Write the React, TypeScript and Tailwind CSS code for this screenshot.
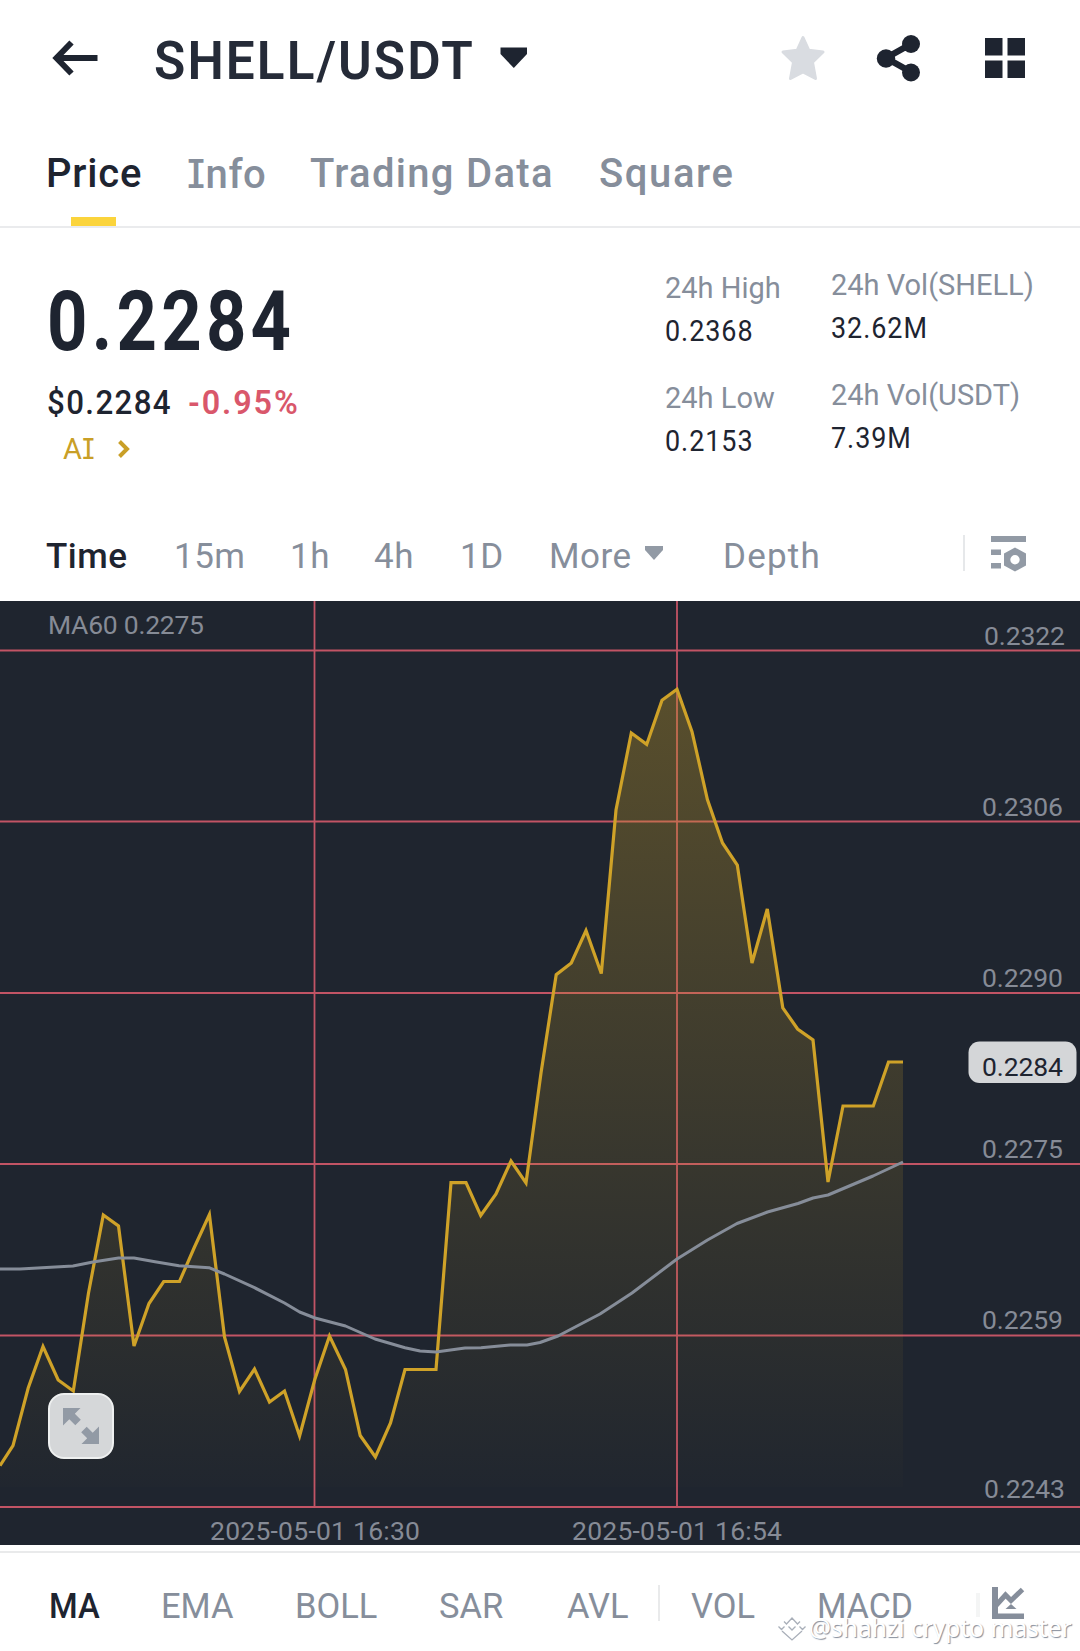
import React from 'react';

const stats = [
  {
    wrap: 'w-[166px] pt-[46px]',
    rows: [
      { label: '24h High', value: '0.2368' },
      { label: '24h Low', value: '0.2153' },
    ],
  },
  {
    wrap: 'w-[248px] pt-[43px]',
    rows: [
      { label: '24h Vol(SHELL)', value: '32.62M' },
      { label: '24h Vol(USDT)', value: '7.39M' },
    ],
  },
];

const frames = [
  { label: '15m', cell: 'w-[116px]' },
  { label: '1h', cell: 'w-[84px]' },
  { label: '4h', cell: 'w-[86px]' },
  { label: '1D', cell: 'w-[89px]' },
];

const indicators = [
  { label: 'EMA', cell: 'w-[134px]' },
  { label: 'BOLL', cell: 'w-[144px]' },
  { label: 'SAR', cell: 'w-[128px]' },
  { label: 'AVL', cell: 'w-[91px]' },
];

// y values are relative to the top of the page, the viewBox starts at 601
const price = [
  [0, 1465.7], [13, 1445.7], [28.2, 1388], [43, 1346.5], [58.2, 1380], [73.3, 1391], [88.5, 1293],
  [103.3, 1215], [118.5, 1226], [134, 1346], [149, 1303.5], [163.7, 1281.5], [179.5, 1281.5],
  [194.5, 1247], [209.4, 1214.5], [224.5, 1337], [239.5, 1391.5], [254.5, 1369], [269.5, 1402],
  [284.5, 1391], [299.6, 1436], [314.8, 1379.5], [329.5, 1336], [345.5, 1369.5], [360.2, 1435.5],
  [375.4, 1457], [390.5, 1423], [405, 1369.5], [436, 1369.5], [451, 1182.7], [466, 1182.7],
  [480.7, 1215.5], [496, 1194], [511, 1161], [526, 1183], [541, 1073], [556.2, 974.7], [571.3, 963],
  [586, 930.5], [601.3, 973.5], [616, 810], [631.3, 733], [646.7, 744.4], [662, 700.3], [677, 689.3],
  [692, 731.6], [707.4, 799.5], [722.5, 843], [737.3, 865], [752, 963], [767.3, 909], [782.8, 1007.8],
  [797.6, 1029], [813, 1040], [828, 1182], [843, 1106], [873.3, 1106], [888.5, 1062], [903, 1062],
];

const average = [
  [0, 1269], [20, 1269], [73, 1266], [93, 1262], [118.5, 1258], [134, 1258], [155, 1261.7],
  [179, 1265.7], [209, 1267.7], [224.5, 1274], [254.5, 1287.7], [284.5, 1303], [299.6, 1312],
  [315, 1318], [345.5, 1326], [375, 1339], [405, 1347.7], [420, 1351], [436, 1352], [465, 1348],
  [481, 1347.7], [510, 1345], [527, 1345], [540, 1342.5], [558, 1336], [600, 1314], [632, 1293],
  [677, 1259], [707.5, 1240], [737, 1223.5], [767.5, 1212], [798, 1203.5], [813, 1198], [828, 1195],
  [873, 1176], [903, 1162],
];

const gridY = [650.5, 821.5, 993, 1164, 1335.5, 1507];
const gridX = [314.5, 677];

const axis = [
  { label: '0.2322', x: 984, y: 645 },
  { label: '0.2306', x: 982, y: 816 },
  { label: '0.2290', x: 982, y: 987 },
  { label: '0.2275', x: 982, y: 1158 },
  { label: '0.2259', x: 982, y: 1329 },
  { label: '0.2243', x: 984, y: 1498 },
];

const toPoints = (list: number[][]) => list.map((p) => p.join(',')).join(' ');

// capital I with serifs
function SerifI() {
  return <span className="font-['Inter',sans-serif] [font-feature-settings:'cv08','ss02']">I</span>;
}

function Header() {
  return (
    <header className="flex h-[116px] items-center pl-[52px] text-[#1e2430]">
      <svg width="46" height="36" viewBox="0 0 46 36" fill="none" stroke="currentColor" strokeWidth="6">
        <path d="M45.500 18H5M19.500 2.500 4.500 18l15 15.500" />
      </svg>
      <h1 className="ml-[56px] w-[347px] origin-left scale-x-[0.95] pt-[6px] text-[54px] leading-none font-semibold tracking-[2.200px] whitespace-nowrap text-[#252b38]">
        SHELL/USDT
      </h1>
      <svg className="-ml-px" width="28" height="22" viewBox="0 0 28 22" fill="currentColor">
        <path d="M.5.500h26.500v6.500L13.800 21 .5 7z" />
      </svg>
      <svg className="ml-[252px]" width="46" height="46" viewBox="0 0 46 46" fill="#d9dce1">
        <path
          d="M23 2.500l5.800 12.800 14.200 1.700-10.500 10.200L35.500 43.500 23 37 10.500 43.500l3-16.300L3 17l14.200-1.700z"
          stroke="#d9dce1"
          strokeWidth="3"
          strokeLinejoin="round"
        />
      </svg>
      <svg className="ml-[50px]" width="46" height="48" viewBox="0 0 46 48" fill="currentColor">
        <path d="M10 24 35 10M10 24l25 14" stroke="currentColor" strokeWidth="6.500" />
        <circle cx="10" cy="24.500" r="9.200" />
        <circle cx="35" cy="10" r="9" />
        <circle cx="35" cy="38.500" r="9" />
      </svg>
      <svg className="ml-[63px]" width="40" height="40" viewBox="0 0 40 40" fill="currentColor">
        <path d="M0 0h17.500v17.500H0zM22.500 0H40v17.500H22.500zM0 22.500h17.500V40H0zM22.500 22.500H40V40H22.500z" />
      </svg>
    </header>
  );
}

function Tabs() {
  return (
    <nav className="flex h-[112px] border-b-2 border-[#eaebed] pt-[38px] pl-[46px] text-[40px] leading-[40px] font-medium whitespace-nowrap text-[#868e9b]">
      <div className="relative w-[141px] text-[#1e2430]">
        <span className="tracking-[0.800px]">Price</span>
        <span className="absolute top-[63px] left-[25px] h-[9px] w-[45px] bg-[#fbd43c]" />
      </div>
      <span className="w-[123px] tracking-[0.500px]"><SerifI />nfo</span>
      <span className="w-[289px] tracking-[1.300px]">Trading Data</span>
      <span className="tracking-[1.600px]">Square</span>
    </nav>
  );
}

function Summary() {
  return (
    <section className="flex h-[282px] pl-[47px] text-[#1e2430]">
      <div className="w-[618px] pt-[52px]">
        <div className="origin-left scale-x-[0.85] text-[83px] leading-none font-bold tracking-[5px]">0.2284</div>
        <div className="mt-[22px] flex text-[34px] leading-none font-medium">
          <span className="w-[141px] origin-left scale-x-[0.92] tracking-[1.500px]">$0.2284</span>
          <span className="origin-left scale-x-[0.95] font-semibold tracking-[2px] text-[#d9576b]">-0.95%</span>
        </div>
        <div className="mt-[15px] flex items-center pl-4 text-[29px] leading-none text-[#c99f27]">
          <span className="w-[55px]">A<SerifI /></span>
          <svg width="12" height="18" viewBox="0 0 12 18" fill="none" stroke="currentColor" strokeWidth="4">
            <path d="M1.500 1.500 9 9l-7.500 7.500" />
          </svg>
        </div>
      </div>
      {stats.map((col) => (
        <div key={col.wrap} className={col.wrap}>
          {col.rows.map((row) => (
            <div key={row.label} className="mb-[38px] text-[29px] leading-none whitespace-nowrap">
              <div className="text-[#868e9b]">{row.label}</div>
              <div className="mt-[14px] origin-left scale-x-[0.93] tracking-[1px]">{row.value}</div>
            </div>
          ))}
        </div>
      ))}
    </section>
  );
}

function Timeframes() {
  return (
    <div className="flex h-[91px] items-center pt-[2px] pl-[46px] text-[35px] leading-none tracking-[0.500px] text-[#868e9b]">
      <span className="w-[128px] font-medium text-[#1e2430]">Time</span>
      {frames.map((f) => (
        <span key={f.label} className={f.cell}>{f.label}</span>
      ))}
      <div className="flex w-[174px] items-center">
        <span className="w-[96px]">More</span>
        <svg className="mb-2" width="18" height="14" viewBox="0 0 18 14" fill="#929aa5">
          <path d="M0 0h18v4L9 14 0 4z" />
        </svg>
      </div>
      <span className="w-[240px] tracking-[1.200px]">Depth</span>
      <span className="mb-[7px] h-9 w-[2px] bg-[#e6e8ea]" />
      <svg className="mb-[5px] ml-[26px]" width="36" height="38" viewBox="0 0 36 38" fill="#929aa5">
        <path d="M0 1h35v6H0zM0 14.500h10v5.500H0zM0 28h10v5.500H0z" />
        <path
          fillRule="evenodd"
          d="M24 12.500 35 18.500v12L24 36.500 13 30.500v-12zM24 20a4.700 4.700 0 1 0 0 9.400 4.700 4.700 0 0 0 0-9.400z"
        />
      </svg>
    </div>
  );
}

function Chart() {
  return (
    <section className="relative h-[944px] bg-[#1f252f]">
      <svg
        className="block font-['Roboto',sans-serif]"
        width="1080"
        height="944"
        viewBox="0 601 1080 944"
        fill="none"
        fontSize="26.5"
      >
        <defs>
          <linearGradient id="area" gradientUnits="userSpaceOnUse" x1="0" y1="689" x2="0" y2="1487">
            <stop offset="0" stopColor="#c99f27" stopOpacity="0.34" />
            <stop offset="1" stopColor="#c99f27" stopOpacity="0.01" />
          </linearGradient>
        </defs>
        <g stroke="#c25465" strokeWidth="1.8">
          {gridY.map((y) => (
            <path key={y} d={`M0 ${y}H1080`} />
          ))}
          {gridX.map((x) => (
            <path key={x} d={`M${x} 601V1507`} />
          ))}
        </g>
        <polygon points={`0,1487 ${toPoints(price)} 903,1487`} fill="url(#area)" />
        <polyline points={toPoints(price)} stroke="#cfa228" strokeWidth="3.200" />
        <polyline points={toPoints(average)} stroke="#868d99" strokeWidth="3" strokeLinejoin="round" />
        <g fill="#868b96">
          <text x="48" y="634" textLength="156">MA60 0.2275</text>
          {axis.map((a) => (
            <text key={a.label} x={a.x} y={a.y} textLength="81">{a.label}</text>
          ))}
          <text x="210" y="1540" textLength="210">2025-05-01 16:30</text>
          <text x="572" y="1540" textLength="210">2025-05-01 16:54</text>
        </g>
        <rect x="968.500" y="1041.500" width="108" height="41.500" rx="11" fill="#d4d6d8" />
        <text x="982" y="1075.500" textLength="81" fill="#1e2430">0.2284</text>
      </svg>
      <button className="absolute top-[792px] left-[48px] flex h-[66px] w-[66px] items-center justify-center rounded-[16px] border-2 border-[#eef0f0] bg-[#d5d7d9]">
        <svg width="36" height="36" viewBox="0 0 36 36" fill="#929aa5">
          <path d="M0 0h17.500l-5.700 5.700 6 6-5.500 5.500-6-6L0 17.500zM36 36H18.500l5.700-5.700-6-6 5.500-5.500 6 6L36 18.500z" />
        </svg>
      </button>
    </section>
  );
}

function Indicators() {
  return (
    <footer className="relative mt-[6px] flex h-[100px] border-t-2 border-[#e9eaeb] pt-[36px] pl-[49px] text-[34.5px] leading-none text-[#868e9b]">
      <span className="w-[112px] origin-left scale-x-[0.95] font-medium text-[#1e2430]">MA</span>
      {indicators.map((i) => (
        <span key={i.label} className={i.cell}>{i.label}</span>
      ))}
      <span className="-mt-1 h-9 w-[2px] bg-[#e9eaeb]" />
      <span className="ml-[31px] w-[126px]">VOL</span>
      <span className="w-[159px] origin-left scale-x-[0.98]">MACD</span>
      <span className="mt-[4px] h-6 w-[4px] bg-[#f4f5f5]" />
      <svg className="-mt-[2px] ml-[12px]" width="34" height="34" viewBox="0 0 34 34">
        <path d="M0 0h6v26.500h26V32H0z" fill="#868e9b" />
        <path d="M4 18.500l9.500-10.500 5.500 5.500L30.500 2.500" fill="none" stroke="#868e9b" strokeWidth="5" />
        <path d="M13.500 22l5.500-5 5.500 5z" fill="#868e9b" />
      </svg>
      <div className="absolute top-[62px] left-[777px] flex items-center font-['Noto_Sans',sans-serif] text-[24.500px] text-white">
        <svg width="30" height="26" viewBox="0 0 30 26" fill="none" stroke="#a9afb9" strokeWidth="1.300">
          <path d="M7 6.500l2.500 2.500L15 3l5.500 6L23 6.500M1.500 11.500l3 3 3-3M22.500 11.500l3 3 3-3M11.500 11.500l3.500 3.500 3.500-3.500M5 16l10 9 10-9" />
        </svg>
        <span className="ml-[2px] whitespace-nowrap [text-shadow:1px_1px_1px_#858d9b]">@shahzi crypto master</span>
      </div>
    </footer>
  );
}

export default function App() {
  return (
    <main className="h-[1651px] w-[1080px] overflow-hidden bg-white font-['Roboto',sans-serif]">
      <Header />
      <Tabs />
      <Summary />
      <Timeframes />
      <Chart />
      <Indicators />
    </main>
  );
}
